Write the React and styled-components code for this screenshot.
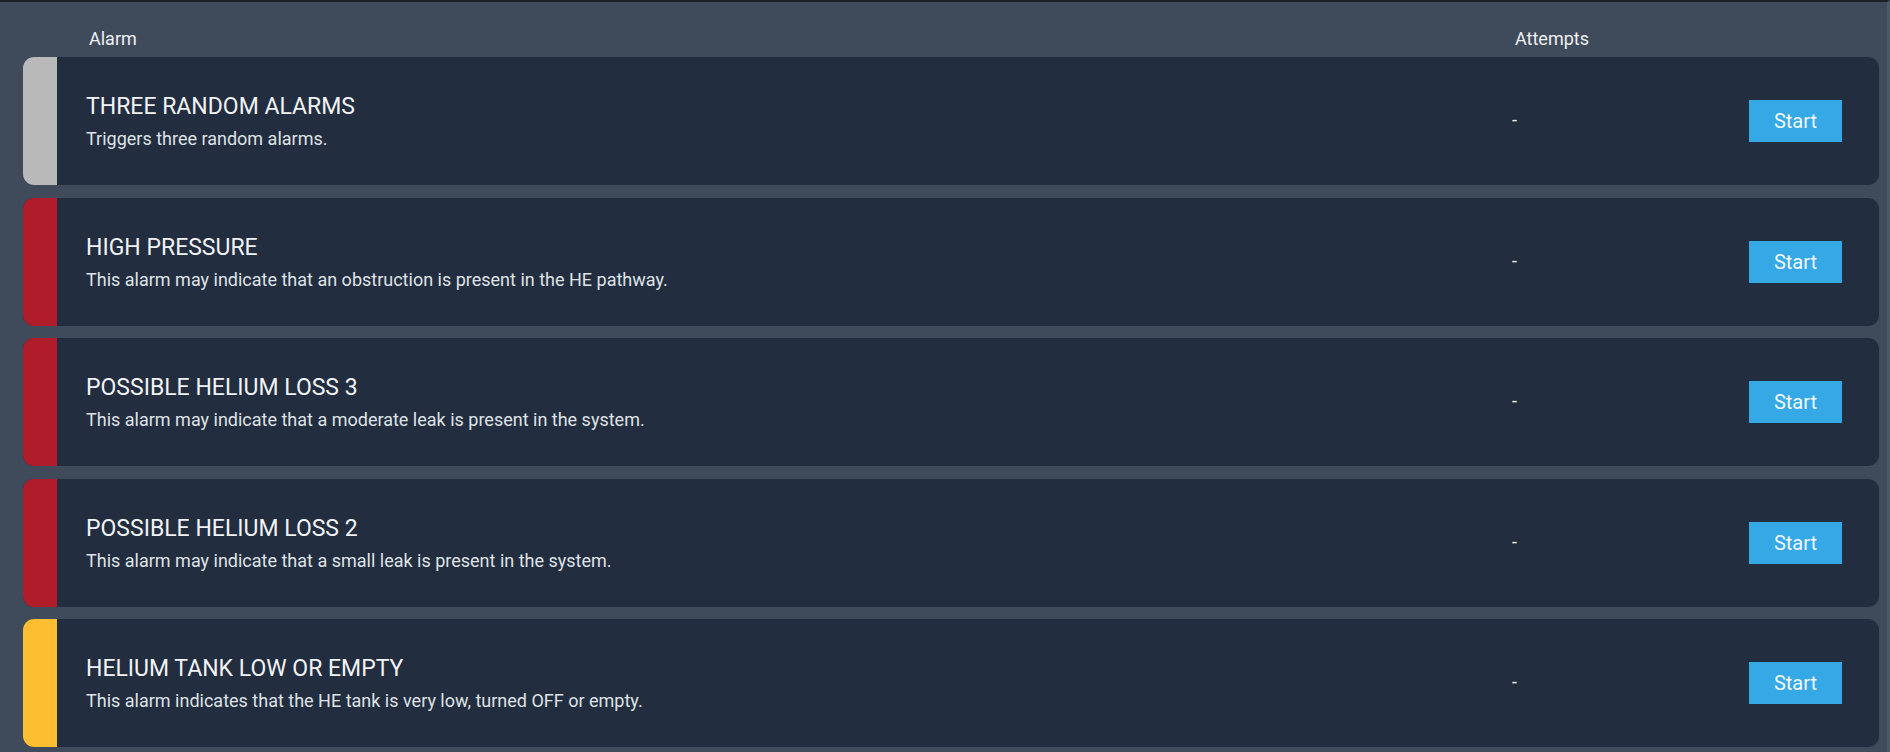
import React from 'react';
import styled, { createGlobalStyle } from 'styled-components';

const GlobalStyle = createGlobalStyle`
  html, body {
    margin: 0;
    padding: 0;
    background: #3f4b5a;
    font-family: Roboto, "Liberation Sans", sans-serif;
    color: #eef0f3;
  }
`;

const Page = styled.div`
  height: 752px;
  box-sizing: border-box;
  border-top: 2px solid #1b1f26;
  border-right: 3px solid #4d5866;
  padding: 0 8px 0 23px;
  overflow: hidden;
`;

const HeaderRow = styled.div`
  display: flex;
  align-items: flex-end;
  height: 55px;
  padding-bottom: 8px;
  box-sizing: border-box;
  font-size: 18px;
  line-height: 21px;
`;

const HeaderAlarm = styled.div`
  flex: 1;
  padding-left: 66px;
`;

const HeaderAttempts = styled.div`
  width: 364px;
`;

const List = styled.div`
  display: flex;
  flex-direction: column;
  gap: 12.5px;
`;

const Card = styled.div`
  display: flex;
  align-items: center;
  height: 128px;
  background: #222d3f;
  border-radius: 11px;
  overflow: hidden;
`;

const Strip = styled.div`
  align-self: stretch;
  width: 34px;
  background: ${(p) => p.$color};
`;

const Info = styled.div`
  flex: 1;
  padding-left: 29px;
  display: flex;
  flex-direction: column;
  gap: 8px;
  padding-top: 1px;
`;

const Title = styled.div`
  font-size: 23px;
  line-height: 27px;
  color: #f1f3f5;
`;

const Desc = styled.div`
  font-size: 18px;
  line-height: 22px;
  color: #dfe2e6;
`;

const Attempts = styled.div`
  width: 237px;
  font-size: 18px;
  padding-bottom: 3px;
`;

const StartButton = styled.button`
  width: 93px;
  height: 42px;
  margin-right: 37px;
  border: none;
  border-radius: 0;
  background: #35a8e6;
  color: #f4f8fb;
  font-family: Roboto, "Liberation Sans", sans-serif;
  font-size: 20px;
  cursor: pointer;
`;

const alarms = [
  {
    color: '#b9b9b9',
    title: 'THREE RANDOM ALARMS',
    desc: 'Triggers three random alarms.',
  },
  {
    color: '#b01c2a',
    title: 'HIGH PRESSURE',
    desc: 'This alarm may indicate that an obstruction is present in the HE pathway.',
  },
  {
    color: '#b01c2a',
    title: 'POSSIBLE HELIUM LOSS 3',
    desc: 'This alarm may indicate that a moderate leak is present in the system.',
  },
  {
    color: '#b01c2a',
    title: 'POSSIBLE HELIUM LOSS 2',
    desc: 'This alarm may indicate that a small leak is present in the system.',
  },
  {
    color: '#fdbf31',
    title: 'HELIUM TANK LOW OR EMPTY',
    desc: 'This alarm indicates that the HE tank is very low, turned OFF or empty.',
  },
];

const App = () => {
  return (
    <Page>
      <GlobalStyle />
      <HeaderRow>
        <HeaderAlarm>Alarm</HeaderAlarm>
        <HeaderAttempts>Attempts</HeaderAttempts>
      </HeaderRow>
      <List>
        {alarms.map((a) => (
          <Card key={a.title}>
            <Strip $color={a.color} />
            <Info>
              <Title>{a.title}</Title>
              <Desc>{a.desc}</Desc>
            </Info>
            <Attempts>-</Attempts>
            <StartButton>Start</StartButton>
          </Card>
        ))}
      </List>
    </Page>
  );
};

export default App;
